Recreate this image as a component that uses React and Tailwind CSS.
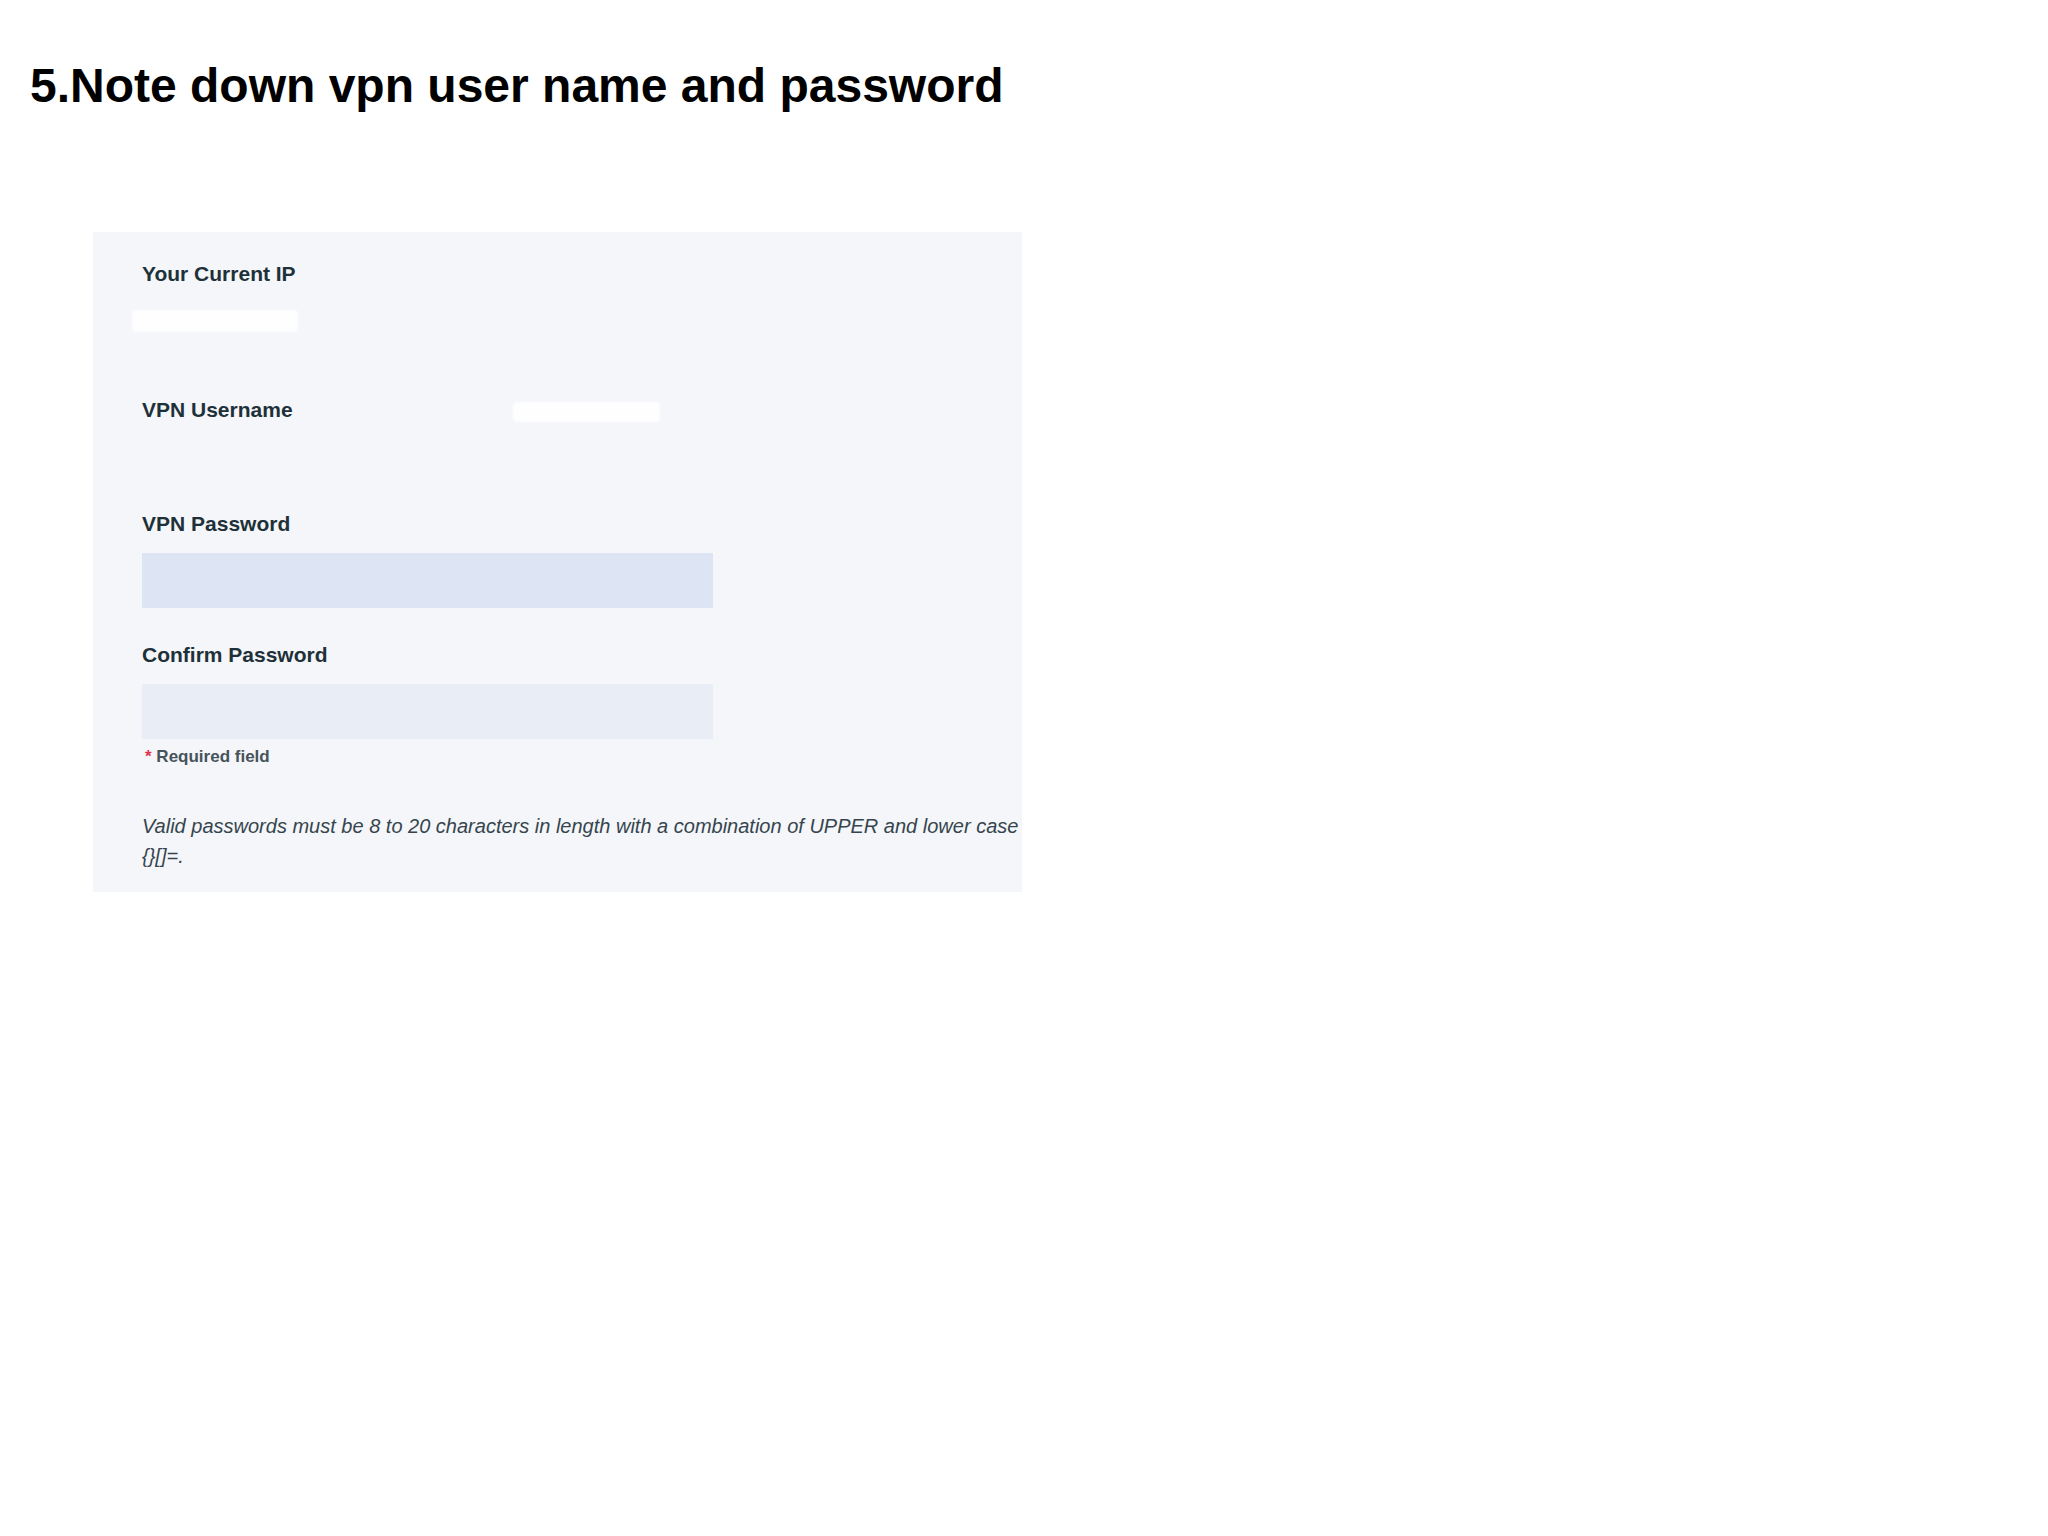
import React from "react";

const label = "text-[21px] leading-[24px] font-bold text-[#1f3138]";

function Field({ title, className, children }) {
  return (
    <div className={className}>
      <div className={label}>{title}</div>
      {children}
    </div>
  );
}

export default function App() {
  return (
    <div className="min-h-screen bg-white font-['Liberation_Sans',Arial,sans-serif]">
      <h1 className="ml-[30px] pt-[62px] text-[48px] leading-none font-bold text-black">
        5.Note down vpn user name and password
      </h1>

      <div className="ml-[93px] mt-[122px] w-[929px] overflow-hidden bg-[#f4f6fa] pl-[49px] pt-[30px] pb-[21px]">
        <Field title="Your Current IP">
          {/* ip is blurred out in the original */}
          <div className="-ml-[10px] mt-[24px] h-[22px] w-[166px] rounded-sm bg-white/90 blur-[1px]" />
        </Field>

        <div className="mt-[66px] flex">
          <div className={`${label} w-[371px]`}>VPN Username</div>
          <div className="mt-[4px] h-[20px] w-[147px] rounded-sm bg-white/90 blur-[1px]" />
        </div>

        <Field title="VPN Password" className="mt-[90px]">
          <div className="mt-[17px] h-[55px] w-[571px] bg-[#dde4f3]" />
        </Field>

        <Field title="Confirm Password" className="mt-[35px]">
          <div className="mt-[17px] h-[55px] w-[571px] bg-[#e9edf5]" />
        </Field>

        <div className="mt-[8px] ml-[3px] text-[17px] leading-[20px] font-bold text-[#46535a]">
          <span className="text-[#e0334a]">*</span> Required field
        </div>

        <div className="mt-[44px] text-[20px] leading-[30px] italic text-[#36454d] whitespace-nowrap">
          <div>Valid passwords must be 8 to 20 characters in length with a combination of UPPER and lower case</div>
          <div>{"{}[]=."}</div>
        </div>
      </div>
    </div>
  );
}
